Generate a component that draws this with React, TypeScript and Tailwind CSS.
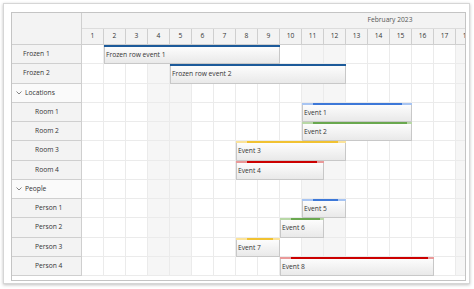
import React from 'react';

type Bar = { dark: string; light: string; from: number; to: number };
type Ev = { start: number; days: number; text: string; frozen?: boolean; bar?: Bar };
type Row = { name: string; level: number; group?: boolean; event?: Ev };

const CELL = 22;
const dayCount = 18;
const weekend = [4, 5, 11, 12, 18];

const blue = { dark: '#3d78d8', light: '#a7c4f2' };
const green = { dark: '#6aa84f', light: '#b8d8a6' };
const yellow = { dark: '#f1c232', light: '#fbe39a' };
const red = { dark: '#cc0000', light: '#ea9999' };

const rows: Row[] = [
  { name: 'Frozen 1', level: 0, event: { start: 2, days: 8, text: 'Frozen row event 1', frozen: true } },
  { name: 'Frozen 2', level: 0, event: { start: 5, days: 8, text: 'Frozen row event 2', frozen: true } },
  { name: 'Locations', level: 0, group: true },
  { name: 'Room 1', level: 1, event: { start: 11, days: 5, text: 'Event 1', bar: { ...blue, from: 11, to: 10 } } },
  { name: 'Room 2', level: 1, event: { start: 11, days: 5, text: 'Event 2', bar: { ...green, from: 11, to: 5 } } },
  { name: 'Room 3', level: 1, event: { start: 8, days: 5, text: 'Event 3', bar: { ...yellow, from: 11, to: 8 } } },
  { name: 'Room 4', level: 1, event: { start: 8, days: 4, text: 'Event 4', bar: { ...red, from: 11, to: 7 } } },
  { name: 'People', level: 0, group: true },
  { name: 'Person 1', level: 1, event: { start: 11, days: 2, text: 'Event 5', bar: { ...blue, from: 11, to: 8 } } },
  { name: 'Person 2', level: 1, event: { start: 10, days: 2, text: 'Event 6', bar: { ...green, from: 11, to: 4 } } },
  { name: 'Person 3', level: 1, event: { start: 8, days: 2, text: 'Event 7', bar: { ...yellow, from: 11, to: 7 } } },
  { name: 'Person 4', level: 1, event: { start: 10, days: 7, text: 'Event 8', bar: { ...red, from: 11, to: 6 } } },
];

const days = Array.from({ length: dayCount }, (_, i) => i + 1);

const Chevron = () => (
  <svg width="6" height="4" viewBox="0 0 6 4" className="mr-[3px]">
    <polyline points="0.5,0.5 3,3 5.5,0.5" fill="none" stroke="#666" strokeWidth="0.8" />
  </svg>
);

const EventBox = ({ ev }: { ev: Ev }) => {
  const width = ev.days * CELL;
  return (
    <div
      className="absolute top-0 bottom-0 flex flex-col border border-t-0 border-[#c8c8c8] bg-gradient-to-b from-white to-[#e9e9e9]"
      style={{ left: (ev.start - 1) * CELL, width }}
    >
      {ev.frozen ? (
        <div className="h-[2px] -mx-px bg-[#1c5a9a]" />
      ) : (
        <div className="relative h-[2px] -mx-px" style={{ background: ev.bar!.light }}>
          <div
            className="absolute top-0 h-[2px]"
            style={{ left: ev.bar!.from, right: ev.bar!.to, background: ev.bar!.dark }}
          />
        </div>
      )}
      <div className="flex flex-1 items-center pl-[1px] whitespace-nowrap text-[#333]">{ev.text}</div>
    </div>
  );
};

const GridRow = ({ row }: { row: Row }) => (
  <div className="flex h-[19.25px] shrink-0">
    <div
      className={`flex w-[70px] shrink-0 items-center border-r border-b border-[#cfcfcf] text-[#333] ${
        row.group ? 'bg-[#fafafa] pl-[4px]' : 'bg-[#f3f3f3]'
      } ${row.level === 1 ? 'pl-[23px]' : row.group ? '' : 'pl-[11px]'}`}
    >
      {row.group && <Chevron />}
      <span className="whitespace-nowrap">{row.name}</span>
    </div>
    <div className="relative flex flex-1 overflow-hidden">
      {days.map((d) => (
        <div
          key={d}
          className={`h-full w-[22px] shrink-0 border-r border-b border-[#ebebeb] ${
            weekend.includes(d) ? 'bg-[#f6f6f6]' : 'bg-white'
          }`}
        />
      ))}
      {row.event && <EventBox ev={row.event} />}
    </div>
  </div>
);

export default function App() {
  return (
    <div className="h-[289px] w-[474px] bg-white p-[3px] text-[6.7px] font-['Open_Sans',sans-serif]">
      <div className="h-[281px] w-[467px] border border-[#d6d6d6] bg-white pl-[7px] pt-[8px] shadow-[0_1px_3px_rgba(0,0,0,0.25)]">
        <div className="flex h-[269px] w-[455px] flex-col overflow-hidden border border-[#c4c4c4] bg-white">
          <div className="flex shrink-0">
            <div className="h-[32px] w-[70px] shrink-0 border-r border-b border-[#cfcfcf] bg-[#f3f3f3]" />
            <div className="flex flex-1 flex-col overflow-hidden">
              <div className="flex h-[16px] w-[616px] shrink-0 items-center justify-center border-b border-[#dcdcdc] bg-[#f3f3f3] text-[#555]">
                February 2023
              </div>
              <div className="flex h-[16px] shrink-0">
                {days.map((d) => (
                  <div
                    key={d}
                    className="flex w-[22px] shrink-0 items-center justify-center border-r border-b border-[#cfcfcf] bg-[#f3f3f3] text-[#333]"
                  >
                    {d}
                  </div>
                ))}
              </div>
            </div>
          </div>
          {rows.map((r) => (
            <GridRow key={r.name} row={r} />
          ))}
        </div>
      </div>
    </div>
  );
}
